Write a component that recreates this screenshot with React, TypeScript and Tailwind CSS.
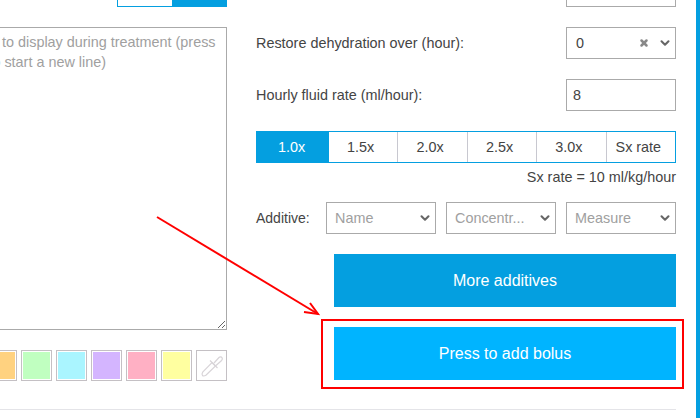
import React from 'react';
import { ChevronDown, X } from 'lucide-react';

const swatches = ['bg-[#ffd280]', 'bg-[#c0ffc0]', 'bg-[#aaf5ff]', 'bg-[#d4b5ff]', 'bg-[#ffb0c4]', 'bg-[#ffffa0]'];
const rates = ['1.5x', '2.0x', '2.5x', '3.0x', 'Sx rate'];

const SelectBox: React.FC<{ label: string }> = ({ label }) => (
    <div className="w-[110px] h-8 border border-[#aaaaaa] flex items-center pl-[8px] pr-[3px] text-[#a0a0a0]">
        <span className="flex-1 truncate pt-[2px]">{label}</span>
        <ChevronDown size={14} strokeWidth={3.5} className="text-[#666666]" />
    </div>
);

const Swatch: React.FC<{ color: string }> = ({ color }) => (
    <div className="w-[31px] h-[31px] shrink-0 border border-[#c4c0c4] p-px bg-white">
        <div className={`w-full h-full ${color}`} />
    </div>
);

const App: React.FC = () => {
    return (
        <div className="relative w-[700px] h-[418px] overflow-hidden bg-white flex font-['Liberation_Sans',Arial,sans-serif] text-[14.4px] text-[#444444]">
            <div className="w-[676px] shrink-0 flex flex-col">
                <div className="flex gap-[29px]">
                    {/* Left column */}
                    <div className="w-[227px] shrink-0 flex flex-col items-end">
                        <div className="w-[110px] h-9 mt-[-29px] border border-[#049fe0] flex">
                            <div className="flex-1 bg-white" />
                            <div className="flex-1 bg-[#049fe0]" />
                        </div>
                        <textarea
                            className="block w-[288px] h-[303px] shrink-0 mt-5 border border-[#aaaaaa] bg-white pl-[10px] pr-[4px] py-[4px] leading-5 placeholder:text-[#a0a0a0]"
                            placeholder={'Notices to display during treatment (press\nEnter to start a new line)'}
                        />
                        <div className="flex gap-1 mt-5">
                            {swatches.map((c) => (
                                <Swatch key={c} color={c} />
                            ))}
                            <div className="w-[31px] h-[31px] shrink-0 border border-[#c4c0c4] flex items-center justify-center">
                                <svg width="24" height="24" viewBox="0 0 24 24" fill="none" stroke="#d8d4d8" strokeWidth="1.2">
                                    <path d="M2.5 21.5c-.8-.8-.6-2 .2-3.4L12 8.5l3.500 3.500-9.600 9.300c-1.400.8-2.600 1-3.400.2z" />
                                    <path d="M10 6.500l7.500 7.500M14 9l5-5.500c1-1 2.500-.6 3 .2.600.9.400 2-.4 2.800L16 11.500" />
                                </svg>
                            </div>
                        </div>
                    </div>

                    {/* Right column */}
                    <div className="flex-1 min-w-0 flex flex-col">
                        <div className="w-[110px] h-9 mt-[-29px] self-end border border-[#aaaaaa]" />

                        <div className="flex items-center justify-between mt-5">
                            <span className="pt-[2px]">Restore dehydration over (hour):</span>
                            <div className="w-[110px] h-8 border border-[#aaaaaa] flex items-center pl-[9px] pr-[3px]">
                                <span className="flex-1 pt-[2px]">0</span>
                                <X size={10} strokeWidth={6} className="text-[#888888] mr-[9px]" />
                                <ChevronDown size={14} strokeWidth={3.5} className="text-[#666666]" />
                            </div>
                        </div>

                        <div className="flex items-center justify-between mt-5">
                            <span className="pt-[2px]">Hourly fluid rate (ml/hour):</span>
                            <div className="w-[110px] h-8 border border-[#aaaaaa] flex items-center px-[6px] pt-[2px]">8</div>
                        </div>

                        <div className="flex h-8 mt-5 border border-[#049fe0]">
                            <div className="w-[72px] bg-[#049fe0] text-white flex items-center justify-center pr-[3px] pt-[2px]">1.0x</div>
                            {rates.map((r, i) => (
                                <div
                                    key={r}
                                    className={`flex-1 flex items-center justify-center pr-[5px] pt-[2px] ${i > 0 ? 'border-l border-[#c8c8d0]' : ''}`}
                                >
                                    {r}
                                </div>
                            ))}
                        </div>

                        <div className="text-right mt-[6px] leading-4">Sx rate = 10 ml/kg/hour</div>

                        <div className="flex items-center mt-[17px]">
                            <span className="w-[70px] text-sm">Additive:</span>
                            <div className="flex flex-1 justify-between">
                                <SelectBox label="Name" />
                                <SelectBox label="Concentr..." />
                                <SelectBox label="Measure" />
                            </div>
                        </div>

                        <div className="ml-[78px] mt-5 flex flex-col gap-5 text-base text-white">
                            <div className="h-[53px] bg-[#049fe0] flex items-center justify-center">More additives</div>
                            <div className="h-[53px] bg-[#00b4ff] flex items-center justify-center">Press to add bolus</div>
                        </div>
                    </div>
                </div>
                <div className="h-px bg-[#e4e4e8] mt-7" />
            </div>
            <div className="ml-5 w-1 h-full bg-[#049fe0]" />

            {/* Annotation drawn over the screenshot */}
            <div className="absolute left-[321px] top-[319px] w-[363px] h-[70px] border-2 border-[#ff0000]" />
            <svg className="absolute left-0 top-0 pointer-events-none" width="700" height="418" fill="none" stroke="#ff0000" strokeWidth="2">
                <path d="M157 217L318 314" />
                <path d="M310 303L318 314L304 312" />
            </svg>
        </div>
    );
};

export default App;
